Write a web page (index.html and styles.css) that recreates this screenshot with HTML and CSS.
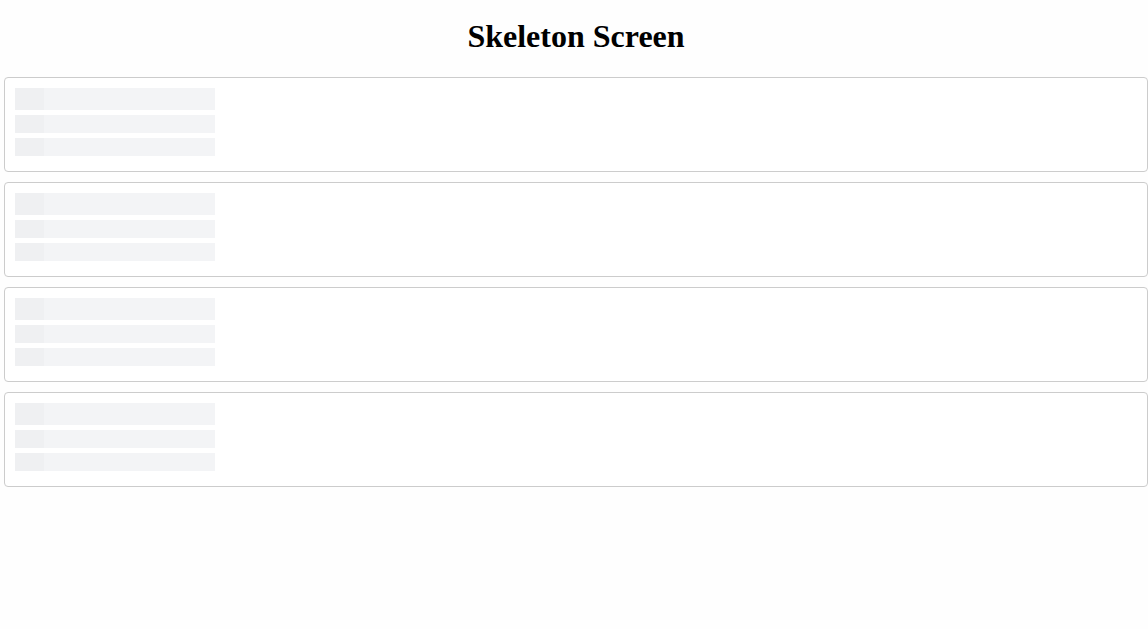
FILE: index.html
```html
<!DOCTYPE html>
<html lang="en">
<head>
<meta charset="utf-8">
<title>Skeleton Screen</title>
<link rel="stylesheet" href="styles.css">
</head>
<body>
<div class="page">
  <h1 class="title">Skeleton Screen</h1>
  <div class="list">
    <div class="card">
      <div class="bar bar-title"></div>
      <div class="bar"></div>
      <div class="bar"></div>
    </div>
    <div class="card">
      <div class="bar bar-title"></div>
      <div class="bar"></div>
      <div class="bar"></div>
    </div>
    <div class="card">
      <div class="bar bar-title"></div>
      <div class="bar"></div>
      <div class="bar"></div>
    </div>
    <div class="card">
      <div class="bar bar-title"></div>
      <div class="bar"></div>
      <div class="bar"></div>
    </div>
  </div>
</div>
</body>
</html>
```

FILE: styles.css
```css
html, body {
  margin: 0;
  padding: 0;
  background: #fefefe;
}

.page {
  padding: 4px 0 4px 4px;
  font-family: "Liberation Serif", "Times New Roman", serif;
}

.title {
  margin: 14px 0 22px;
  font-size: 32px;
  font-weight: bold;
  text-align: center;
  color: #000;
  line-height: normal;
}

.list {
  display: flex;
  flex-direction: column;
  gap: 10px;
}

.card {
  border: 1px solid #cccccc;
  border-radius: 4px;
  background: #ffffff;
  padding: 10px 10px 15px;
  display: flex;
  flex-direction: column;
  gap: 5px;
  height: 95px;
  box-sizing: border-box;
}

.bar {
  width: 200px;
  height: 18px;
  background: linear-gradient(90deg, #eff0f2 0, #eff0f2 29px, #f3f4f6 29px, #f3f4f6 100%);
}

.bar-title {
  height: 22px;
}
```
